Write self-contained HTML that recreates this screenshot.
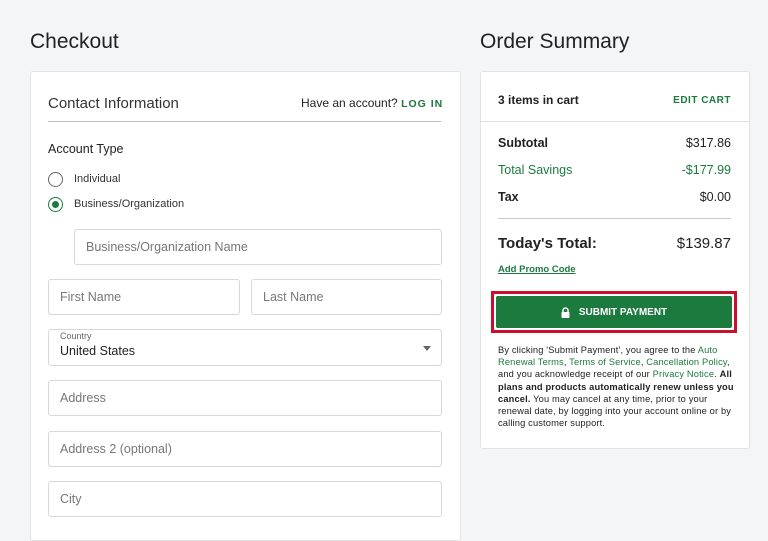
<!DOCTYPE html>
<html><head><style>
*{box-sizing:border-box;margin:0;padding:0}
body{width:768px;height:521px;overflow:hidden;background:#f4f5f7;font-family:"Liberation Sans",sans-serif;color:#222;position:relative}
.a{position:absolute}
h1{position:absolute;font-weight:400;font-size:21px;color:#222}
.card{position:absolute;background:#fff;border:1px solid #e3e3e3;border-radius:3px}
.f{position:absolute;border:1px solid #d8d8d8;border-radius:3px;background:#fff;font-size:12.5px;color:#777;padding-left:11px;display:flex;align-items:center}
.g{color:#1c7a3e}
.row{position:absolute;left:498px;width:233px;display:flex;justify-content:space-between;font-size:12.5px}
</style></head><body>
<h1 style="left:30px;top:30px">Checkout</h1>
<h1 style="left:480px;top:30px">Order Summary</h1>
<div class="card" style="left:30px;top:71px;width:431px;height:470px"></div>
<div class="a" style="left:48px;top:95px;font-size:15px;color:#333">Contact Information</div>
<div class="a" style="left:301px;top:96px;font-size:12px;color:#222">Have an account? <b class="g" style="font-size:10.5px;letter-spacing:1px">LOG IN</b></div>
<div class="a" style="left:48px;top:121px;width:393px;height:1px;background:#bbb"></div>
<div class="a" style="left:48px;top:142px;font-size:12.5px">Account Type</div>
<div class="a" style="left:48px;top:172px;width:15px;height:15px;border:1.5px solid #666;border-radius:50%"></div>
<div class="a" style="left:74px;top:173px;font-size:11px;color:#333">Individual</div>
<div class="a" style="left:48px;top:197px;width:15px;height:15px;border:1.5px solid #1c7a3e;border-radius:50%"><div style="margin:2.5px;width:7px;height:7px;background:#1c7a3e;border-radius:50%"></div></div>
<div class="a" style="left:74px;top:198px;font-size:11px;color:#333">Business/Organization</div>
<div class="f" style="left:74px;top:229px;width:368px;height:36px">Business/Organization Name</div>
<div class="f" style="left:48px;top:279px;width:192px;height:36px">First Name</div>
<div class="f" style="left:251px;top:279px;width:191px;height:36px">Last Name</div>
<div class="f" style="left:48px;top:329px;width:394px;height:37px;color:#222;display:block;padding-top:0"><div style="font-size:9px;color:#666;margin-top:-1px;line-height:14px">Country</div><div style="font-size:12.5px;line-height:16px">United States</div><div style="position:absolute;right:10px;top:16px;border:4px solid transparent;border-top:5px solid #666"></div></div>
<div class="f" style="left:48px;top:380px;width:394px;height:36px">Address</div>
<div class="f" style="left:48px;top:431px;width:394px;height:36px">Address 2 (optional)</div>
<div class="f" style="left:48px;top:481px;width:394px;height:36px">City</div>

<div class="card" style="left:480px;top:71px;width:270px;height:378px"></div>
<div class="row" style="top:93px"><b style="font-size:12px">3 items in cart</b><b class="g" style="font-size:10px;letter-spacing:.5px;padding-top:2px">EDIT CART</b></div>
<div class="a" style="left:480px;top:121px;width:270px;height:1px;background:#ddd"></div>
<div class="row" style="top:136px"><b>Subtotal</b><span>$317.86</span></div>
<div class="row g" style="top:163px"><span>Total Savings</span><span>-$177.99</span></div>
<div class="row" style="top:190px"><b>Tax</b><span>$0.00</span></div>
<div class="a" style="left:498px;top:218px;width:233px;height:1px;background:#ccc"></div>
<div class="row" style="top:235px;font-size:15px"><b style="font-weight:600">Today's Total:</b><span>$139.87</span></div>
<div class="a g" style="left:498px;top:264px;font-size:9.5px;font-weight:bold;text-decoration:underline">Add Promo Code</div>
<div class="a" style="left:491px;top:291px;width:246px;height:42px;border:3px solid #c8102e"></div>
<div class="a" style="left:496px;top:296px;width:236px;height:32px;background:#1c7a3e;border-radius:2px;color:#fff;font-size:10px;font-weight:bold;display:flex;align-items:center;justify-content:center"><svg width="9" height="11" viewBox="0 0 9 11" style="margin-right:9px"><path d="M2 5V3.5a2.5 2.5 0 0 1 5 0V5" stroke="#fff" stroke-width="1.5" fill="none"/><rect x="0.5" y="5" width="8" height="6" rx="1" fill="#fff"/></svg>SUBMIT PAYMENT</div>
<div class="a" style="left:498px;top:344px;width:236px;font-size:9.3px;letter-spacing:.15px;line-height:12.2px;color:#222">By clicking 'Submit Payment', you agree to the <span class="g">Auto</span><br><span class="g">Renewal Terms</span>, <span class="g">Terms of Service</span>, <span class="g">Cancellation Policy</span>,<br>and you acknowledge receipt of our <span class="g">Privacy Notice</span>. <b>All</b><br><b>plans and products automatically renew unless you</b><br><b>cancel.</b> You may cancel at any time, prior to your<br>renewal date, by logging into your account online or by<br>calling customer support.</div>
</body></html>
